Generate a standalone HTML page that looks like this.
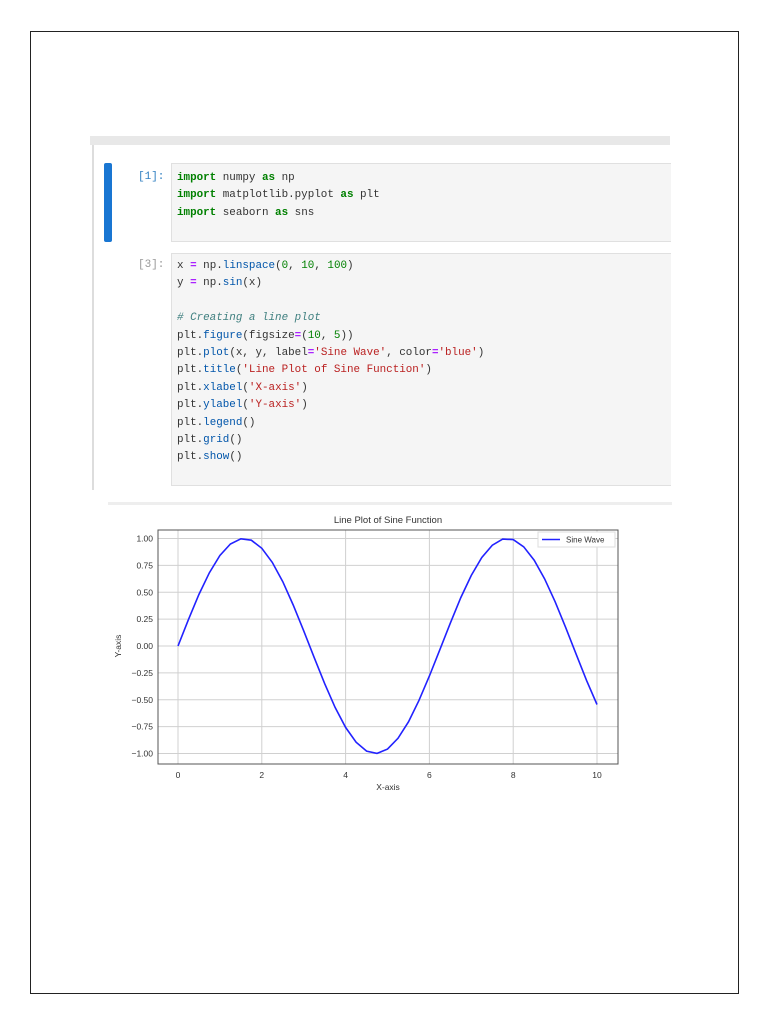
<!DOCTYPE html>
<html><head><meta charset="utf-8"><style>
body{margin:0;background:#fff;width:768px;height:1024px;position:relative;overflow:hidden;font-family:"Liberation Sans",sans-serif}
.border{position:absolute;left:30px;top:31px;width:707px;height:961px;border:1.5px solid #222}
.band{position:absolute;left:90px;top:136px;width:580px;height:9px;background:#e8e8e8}
.vline{position:absolute;left:92px;top:145px;width:2px;height:345px;background:#ddd}
.bar{position:absolute;left:104px;top:163px;width:8px;height:79px;background:#1976d2;border-radius:2px}
.cell{position:absolute;left:171px;width:499px;background:#f5f5f5;border:1px solid #e0e0e0;border-right:none}
pre{margin:0;font-family:"Liberation Mono",monospace;font-size:10.9px;line-height:17.4px;color:#333}
.p{position:absolute;font-family:"Liberation Mono",monospace;font-size:11px}
.k{color:#008000;font-weight:bold}.o{color:#aa22ff;font-weight:bold}.n{color:#008000}.s{color:#ba2121}.c{color:#408080;font-style:italic}.f{color:#0055aa}
</style></head><body>
<div class="border"></div>
<div class="band"></div>
<div class="vline"></div>
<div class="bar"></div>
<div class="p" style="left:138px;top:171px;color:#307fc1">[1]:</div>
<div class="p" style="left:138px;top:259px;color:#999">[3]:</div>
<div class="cell" style="top:163px;height:77px"><pre style="padding:6px 0 0 5px"><span class="k">import</span> numpy <span class="k">as</span> np
<span class="k">import</span> matplotlib.pyplot <span class="k">as</span> plt
<span class="k">import</span> seaborn <span class="k">as</span> sns</pre></div>
<div class="cell" style="top:253px;height:231px"><pre style="padding:4px 0 0 5px">x <span class="o">=</span> np.<span class="f">linspace</span>(<span class="n">0</span>, <span class="n">10</span>, <span class="n">100</span>)
y <span class="o">=</span> np.<span class="f">sin</span>(x)

<span class="c"># Creating a line plot</span>
plt.<span class="f">figure</span>(figsize<span class="o">=</span>(<span class="n">10</span>, <span class="n">5</span>))
plt.<span class="f">plot</span>(x, y, label<span class="o">=</span><span class="s">'Sine Wave'</span>, color<span class="o">=</span><span class="s">'blue'</span>)
plt.<span class="f">title</span>(<span class="s">'Line Plot of Sine Function'</span>)
plt.<span class="f">xlabel</span>(<span class="s">'X-axis'</span>)
plt.<span class="f">ylabel</span>(<span class="s">'Y-axis'</span>)
plt.<span class="f">legend</span>()
plt.<span class="f">grid</span>()
plt.<span class="f">show</span>()</pre></div>
<div style="position:absolute;left:108px;top:502px;width:564px;height:3px;background:#eee"></div>
<svg style="position:absolute;left:0;top:0" width="768" height="1024" font-family="Liberation Sans, sans-serif" font-size="8.5" fill="#333">
<g stroke="#d0d0d0" stroke-width="1">
<line x1="178" y1="530" x2="178" y2="764"/><line x1="261.8" y1="530" x2="261.8" y2="764"/><line x1="345.6" y1="530" x2="345.6" y2="764"/><line x1="429.4" y1="530" x2="429.4" y2="764"/><line x1="513.2" y1="530" x2="513.2" y2="764"/><line x1="597" y1="530" x2="597" y2="764"/>
<line x1="158" y1="538.5" x2="618" y2="538.5"/><line x1="158" y1="565.4" x2="618" y2="565.4"/><line x1="158" y1="592.3" x2="618" y2="592.3"/><line x1="158" y1="619.1" x2="618" y2="619.1"/><line x1="158" y1="646" x2="618" y2="646"/><line x1="158" y1="672.9" x2="618" y2="672.9"/><line x1="158" y1="699.8" x2="618" y2="699.8"/><line x1="158" y1="726.6" x2="618" y2="726.6"/><line x1="158" y1="753.5" x2="618" y2="753.5"/>
</g>
<rect x="158" y="530" width="460" height="234" fill="none" stroke="#555" stroke-width="1"/>
<polyline fill="none" stroke="#2222ff" stroke-width="1.6" points="178,646 188.5,619.4 198.9,594.5 209.4,572.7 219.9,555.5 230.4,544 240.9,538.8 251.3,540.2 261.8,548.3 272.3,562.4 282.8,581.7 293.2,605 303.7,630.8 314.2,657.6 324.7,683.7 335.1,707.4 345.6,727.4 356.1,742.2 366.6,751.1 377,753.4 387.5,749.1 398,738.3 408.5,721.8 418.9,700.6 429.4,676 439.9,649.6 450.4,622.9 460.8,597.6 471.3,575.4 481.8,557.5 492.3,545.2 502.7,539.1 513.2,539.6 523.7,546.8 534.2,560.2 544.6,578.8 555.1,601.7 565.6,627.3 576.1,654.1 586.5,680.3 597,704.5"/>
<rect x="538" y="532" width="77" height="15" fill="#fff" stroke="#ddd"/>
<line x1="542" y1="539.5" x2="560" y2="539.5" stroke="#2222ff" stroke-width="1.6"/>
<text x="566" y="542.5" font-size="8">Sine Wave</text>
<text x="388" y="523" text-anchor="middle" font-size="9.5">Line Plot of Sine Function</text>
<g text-anchor="end"><text x="153" y="541.5">1.00</text><text x="153" y="568.4">0.75</text><text x="153" y="595.3">0.50</text><text x="153" y="622.1">0.25</text><text x="153" y="649">0.00</text><text x="153" y="675.9">−0.25</text><text x="153" y="702.8">−0.50</text><text x="153" y="729.6">−0.75</text><text x="153" y="756.5">−1.00</text></g>
<g text-anchor="middle"><text x="178" y="778">0</text><text x="261.8" y="778">2</text><text x="345.6" y="778">4</text><text x="429.4" y="778">6</text><text x="513.2" y="778">8</text><text x="597" y="778">10</text>
<text x="388" y="790">X-axis</text>
<text transform="translate(121,646) rotate(-90)">Y-axis</text></g>
</svg>
</body></html>
